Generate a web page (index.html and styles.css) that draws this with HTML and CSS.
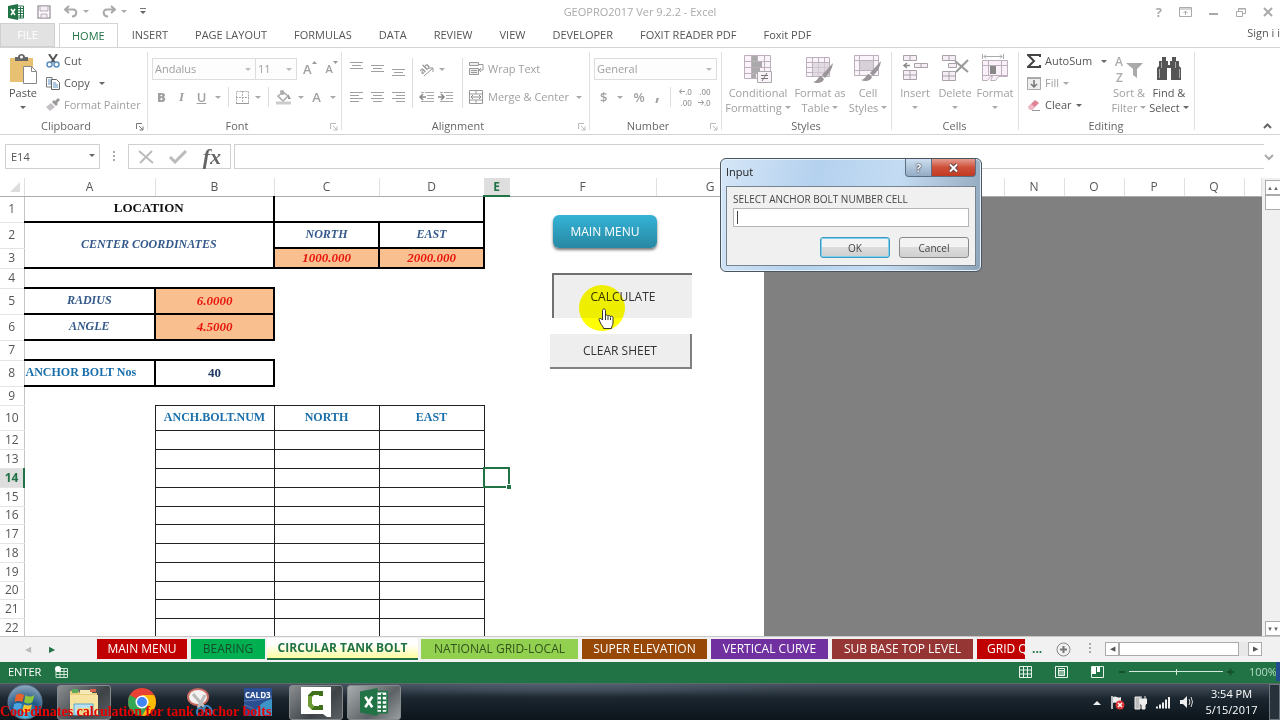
FILE: index.html
```html
<!DOCTYPE html>
<html lang="en">
<head>
    <meta charset="UTF-8">
    <title>GEOPRO2017 Ver 9.2.2 - Excel</title>
    <link rel="stylesheet" href="styles.css">
</head>
<body>
    <!-- shared icons -->
    <svg class="defs" aria-hidden="true">
        <symbol id="excel" viewBox="0 0 16 16">
            <path d="M9 2h6.500v12H9z" fill="#fff" stroke="#217346"/>
            <path d="M10 4.500h5M10 7h5M10 9.500h5M10 12h5M12.500 3v11" stroke="#217346" fill="none"/>
            <path d="M0 2l10-2v16L0 14z" fill="#217346"/>
            <path d="M3 5l4 6M7 5l-4 6" stroke="#fff" stroke-width="1.500"/>
        </symbol>
        <symbol id="launcher" viewBox="0 0 8 8">
            <path d="M.5 6V.5H6M3 3l4 4M7 3.500V7H3.500" fill="none" stroke="currentColor"/>
        </symbol>
        <symbol id="lines-left" viewBox="0 0 14 12"><path d="M0 1.500h13M0 4.500h9M0 7.500h13M0 10.500h9" stroke="currentColor"/></symbol>
        <symbol id="lines-center" viewBox="0 0 14 12"><path d="M0 1.500h13M2 4.500h9M0 7.500h13M2 10.500h9" stroke="currentColor"/></symbol>
        <symbol id="lines-right" viewBox="0 0 14 12"><path d="M0 1.500h13M4 4.500h9M0 7.500h13M4 10.500h9" stroke="currentColor"/></symbol>
        <symbol id="lines-top" viewBox="0 0 14 16"><path d="M0 1.500h13M2 4.500h9M0 7.500h13" stroke="currentColor"/></symbol>
        <symbol id="lines-mid" viewBox="0 0 14 16"><path d="M0 4.500h13M2 7.500h9M0 10.500h13" stroke="currentColor"/></symbol>
        <symbol id="lines-bottom" viewBox="0 0 14 16"><path d="M0 8.500h13M2 11.500h9M0 14.500h13" stroke="currentColor"/></symbol>
        <symbol id="brush" viewBox="0 0 22 22">
            <path d="M21 1L10 13l3 3q7-7 8-15z" fill="#999599"/>
            <path d="M9 14c-3 0-3 5-8 6 4 2 10 1 11-3z" fill="#999599"/>
        </symbol>
    </svg>

    <header class="titlebar">
        <div class="quick">
            <svg class="q-excel" width="16" height="16"><use href="#excel"/></svg>
            <button class="icon" aria-label="Save"><svg width="14" height="14" viewBox="0 0 14 14"><path d="M1 1h12v12H1z" fill="none" stroke="#aaa0aa" stroke-width="1.500"/><path d="M3 1h8v5H3zM4 9h6v4H4z" fill="#f5eef5" stroke="#b5a8b5"/></svg></button>
            <button class="icon undo" aria-label="Undo"><svg width="14" height="13" viewBox="0 0 14 13"><path d="M5 1L1 4.500 5 8M1.500 4.500H9c5 0 4 7-1 7" fill="none" stroke="#a9a9a9" stroke-width="2"/></svg><i class="caret"></i></button>
            <button class="icon redo" aria-label="Redo"><svg width="14" height="13" viewBox="0 0 14 13"><path d="M9 1l4 3.500L9 8M12.500 4.500H5c-5 0-4 7 1 7" fill="none" stroke="#a9a9a9" stroke-width="2"/></svg><i class="caret"></i></button>
            <button class="icon" aria-label="Customize"><svg width="6" height="7" viewBox="0 0 6 7"><path d="M0 .5h6" stroke="#777"/><path d="M0 3h6L3 6z" fill="#666"/></svg></button>
        </div>
        <h1>GEOPRO2017 Ver 9.2.2 - Excel</h1>
        <div class="winbtns">
            <button class="icon help" aria-label="Help">?</button>
            <button class="icon" aria-label="Ribbon options"><svg width="13" height="10" viewBox="0 0 13 10"><path d="M.5.5h12v9H.5zM0 2h13M6.500 8V4M4.500 6l2-2 2 2" fill="none" stroke="#aaa"/></svg></button>
            <button class="icon" aria-label="Minimize"><svg width="10" height="10" viewBox="0 0 10 10"><path d="M0 7h9" stroke="#aaa" stroke-width="2"/></svg></button>
            <button class="icon" aria-label="Restore"><svg width="10" height="10" viewBox="0 0 10 10"><path d="M.5 4.500h6v5h-6zM2.500 4V1.500h7v5H7M2 2h8" fill="none" stroke="#aaa"/></svg></button>
            <button class="icon" aria-label="Close"><svg width="10" height="10" viewBox="0 0 10 10"><path d="M1 1l8 8M9 1L1 9" stroke="#aaa" stroke-width="2"/></svg></button>
        </div>
    </header>

    <nav class="tabs">
        <button class="file">FILE</button>
        <button class="on">HOME</button>
        <button>INSERT</button>
        <button>PAGE LAYOUT</button>
        <button>FORMULAS</button>
        <button>DATA</button>
        <button>REVIEW</button>
        <button>VIEW</button>
        <button>DEVELOPER</button>
        <button>FOXIT READER PDF</button>
        <button>Foxit PDF</button>
        <a class="signin" href="#">Sign i i</a>
    </nav>

    <section class="ribbon">
        <div class="group clipboard">
            <div class="tools">
                <button class="big dark">
                    <svg width="28" height="30" viewBox="0 0 28 30"><path d="M1 4h23v24H1z" fill="#e8c071"/><path d="M6 3h3c0-4 7-4 7 0h3v4H6z" fill="#666"/><circle cx="12.500" cy="3" r="1.500" fill="#fff"/><path d="M14.500 12.500h8l5 5v12h-13z" fill="#fff" stroke="#888"/><path d="M22.500 12.500v5h5" fill="none" stroke="#888"/></svg>
                    <span>Paste</span><i class="caret"></i>
                </button>
                <div class="stack">
                    <button class="small dark"><svg width="14" height="14" viewBox="0 0 14 14"><path d="M3 0l6 9M11 0L5 9" stroke="#555" stroke-width="2"/><circle cx="3.500" cy="10.500" r="2.500" fill="none" stroke="#5b8fc0" stroke-width="1.500"/><circle cx="10.500" cy="10.500" r="2.500" fill="none" stroke="#5b8fc0" stroke-width="1.500"/></svg>Cut</button>
                    <button class="small dark"><svg width="14" height="14" viewBox="0 0 14 14"><path d="M.5 1.500H6V11H.5z" fill="#fff" stroke="#777"/><path d="M5.500 3.500h5l3 3v7h-8z" fill="#fff" stroke="#666"/><path d="M2 4h3M2 6h3M2 8h3M7 7h3M7 9h5M7 11h5" stroke="#5b8fc0"/></svg>Copy<i class="caret far"></i></button>
                    <button class="small"><svg width="14" height="14" viewBox="0 0 14 14"><path d="M0 9l5-4 4 4-5 4z" fill="#c5c0c5"/><path d="M6 4l2-2 4 4-2 2zM9 3l3-3 2 2-3 3z" fill="#999"/></svg>Format Painter</button>
                </div>
            </div>
            <div class="caption">Clipboard<svg class="launch dark" width="8" height="8"><use href="#launcher"/></svg></div>
        </div>

        <div class="group font">
            <div class="tools rows">
                <div class="row">
                    <label class="combo name"><select aria-label="Font"><option>Andalus</option></select></label>
                    <label class="combo size"><select aria-label="Font size"><option>11</option></select></label>
                    <button class="icon glyph grow">A<svg width="5" height="4" viewBox="0 0 5 4"><path d="M0 3l2.500-3L5 3z" fill="#999"/></svg></button>
                    <button class="icon glyph shrink">A<svg width="5" height="4" viewBox="0 0 5 4"><path d="M0 0l2.500 3L5 0z" fill="#999"/></svg></button>
                </div>
                <div class="row styles-row">
                    <button class="icon glyph"><b>B</b></button>
                    <button class="icon glyph serif"><i>I</i></button>
                    <button class="icon glyph"><u>U</u></button><i class="caret"></i>
                    <span class="sep"></span>
                    <button class="icon" aria-label="Borders"><svg width="13" height="13" viewBox="0 0 13 13"><path d="M.5.5h12v12H.5zM6.500 0v12M0 6.500h13" fill="none" stroke="#aaa" stroke-dasharray="2 1"/><path d="M0 12.500h13" stroke="#999"/></svg></button><i class="caret"></i>
                    <span class="sep"></span>
                    <button class="icon" aria-label="Fill color"><svg width="16" height="15" viewBox="0 0 16 15"><path d="M2 6l5-4 5 4-5 5zM5 5V1h2v4" fill="none" stroke="#aaa" stroke-width="1.500"/><path d="M12 4l3 5h-3z" fill="#999"/><path d="M0 13h15" stroke="#ccc" stroke-width="3"/></svg></button><i class="caret"></i>
                    <button class="icon glyph">A</button><i class="caret"></i>
                </div>
            </div>
            <div class="caption">Font<svg class="launch" width="8" height="8"><use href="#launcher"/></svg></div>
        </div>

        <div class="group align">
            <div class="tools">
                <div class="align-a">
                    <div class="row"><svg width="14" height="16"><use href="#lines-top"/></svg><svg width="14" height="16"><use href="#lines-mid"/></svg><svg width="14" height="16"><use href="#lines-bottom"/></svg></div>
                    <div class="row"><svg width="14" height="12"><use href="#lines-left"/></svg><svg width="14" height="12"><use href="#lines-center"/></svg><svg width="14" height="12"><use href="#lines-right"/></svg></div>
                </div>
                <div class="align-b">
                    <div class="row"><svg class="orient" width="16" height="15" viewBox="0 0 16 15"><text x="0" y="10" transform="rotate(-45 5 7)" font-size="9" font-weight="700" fill="#999">ab</text><path d="M5 14l9-8M10 6h4v4" fill="none" stroke="#999"/></svg><i class="caret"></i></div>
                    <div class="row indent"><svg width="15" height="12" viewBox="0 0 15 12"><path d="M6 1.500h9M8 4.500h7M8 7.500h7M2 10.500h13M2 1.500h3" stroke="#aaa"/><path d="M4 3L1 6l3 3M1 6h6" fill="none" stroke="#888" stroke-width="1.500"/></svg><svg width="15" height="12" viewBox="0 0 15 12"><path d="M6 1.500h9M8 4.500h7M8 7.500h7M2 10.500h13M2 1.500h3" stroke="#aaa"/><path d="M3 3l3 3-3 3M0 6h6" fill="none" stroke="#888" stroke-width="1.500"/></svg></div>
                </div>
                <div class="align-c">
                    <button class="small"><svg width="15" height="14" viewBox="0 0 15 14"><path d="M.5.5h9v3h-9zM.5 6.500h9v6h-9z" fill="#eee" stroke="#999"/><path d="M2 8.500h6M2 10.500h6M9 2.500h5V8h-3M12 6l-2 2 2 2" fill="none" stroke="#999"/></svg>Wrap Text</button>
                    <button class="small"><svg width="15" height="14" viewBox="0 0 15 14"><path d="M.5.500h13v13H.5zM0 4h14M0 10h14M7 0v4M7 10v4" fill="none" stroke="#999"/><path d="M2 7h10M4 5L2 7l2 2M10 5l2 2-2 2" fill="none" stroke="#888"/></svg>Merge &amp; Center<i class="caret mid"></i></button>
                </div>
            </div>
            <div class="caption">Alignment<svg class="launch" width="8" height="8"><use href="#launcher"/></svg></div>
        </div>

        <div class="group number">
            <div class="tools rows">
                <div class="row"><label class="combo fmt"><select aria-label="Number format"><option>General</option></select></label></div>
                <div class="row num-row">
                    <button class="icon glyph">$</button><i class="caret"></i>
                    <button class="icon glyph">%</button>
                    <button class="icon glyph comma">,</button>
                    <span class="sep"></span>
                    <button class="dec"><span class="with-arrow"><svg width="6" height="5" viewBox="0 0 6 5"><path d="M2.500 0L.5 2.500l2 2.500M.5 2.500H6" fill="none" stroke="#999"/></svg>.0</span><span>.00</span></button>
                    <button class="dec"><span>.00</span><span class="with-arrow"><svg width="6" height="5" viewBox="0 0 6 5"><path d="M3.500 0l2 2.500-2 2.500M0 2.500h5.500" fill="none" stroke="#999"/></svg>.0</span></button>
                </div>
            </div>
            <div class="caption">Number<svg class="launch" width="8" height="8"><use href="#launcher"/></svg></div>
        </div>

        <div class="group styles">
            <div class="tools">
                <button class="big w1">
                    <svg width="28" height="30" viewBox="0 0 28 30"><path d="M.5 1.500h26v23H.5zM0 7.500h27M0 13.500h27M0 19.500h27M7.500 1v24M13.500 1v24M20.500 1v24" fill="#faf4fa" stroke="#bbb0bb"/><path d="M8 2h5v5H8zM8 8h10v5H8zM8 14h8v5H8zM8 20h4v4H8z" fill="#aaa"/><path d="M13.500 17.500h14v11h-14z" fill="#faf4fa" stroke="#aaa"/><path d="M17 21.500h7M17 24.500h7M23 19l-5 8" stroke="#777"/></svg>
                    <span>Conditional<br>Formatting<i class="caret in"></i></span>
                </button>
                <button class="big w2">
                    <svg width="28" height="30" viewBox="0 0 28 30"><path d="M.5 3.500h23v19H.5zM0 8.500h24M0 13.500h24M0 18.500h24M6.500 3v20M12.500 3v20M18.500 3v20" fill="#faf4fa" stroke="#bbb0bb"/><path d="M7 9h16v13H7z" fill="#d8d0d8" opacity=".7"/><use href="#brush" x="6" y="8" width="22" height="22"/></svg>
                    <span>Format as<br>Table<i class="caret in"></i></span>
                </button>
                <button class="big w3">
                    <svg width="28" height="30" viewBox="0 0 28 30"><path d="M.5 1.500h24v20H.5zM0 6.500h25M0 16.500h25M5.500 1v21M19.500 1v21" fill="#faf4fa" stroke="#bbb0bb"/><path d="M6 7h13v9H6z" fill="#d8d0d8"/><use href="#brush" x="6" y="6" width="22" height="22"/></svg>
                    <span>Cell<br>Styles<i class="caret in"></i></span>
                </button>
            </div>
            <div class="caption">Styles</div>
        </div>

        <div class="group cells">
            <div class="tools">
                <button class="big">
                    <svg width="28" height="30" viewBox="0 0 28 30"><path d="M2.500 1.500h13v5h-13zM9 1v6M2.500 16.500h13v9h-13zM9 16v10M2 21h14M13.500 9.500h13v4h-13zM20 9v5" fill="#f5eef5" stroke="#aaa0aa"/><path d="M9 11.500H3M6 9l-3 2.500L6 14" fill="none" stroke="#888" stroke-width="1.500"/></svg>
                    <span>Insert</span><i class="caret"></i>
                </button>
                <button class="big">
                    <svg width="28" height="30" viewBox="0 0 28 30"><path d="M1.500 1.500h13v5h-13zM8 1v6M1.500 17.500h13v9h-13zM8 17v10M1 22h14M7.500 9.500h8v4h-8z" fill="#f5eef5" stroke="#aaa0aa"/><path d="M14 7l13 11M27 6L15 18" stroke="#999" stroke-width="2"/></svg>
                    <span>Delete</span><i class="caret"></i>
                </button>
                <button class="big">
                    <svg width="28" height="30" viewBox="0 0 28 30"><path d="M1.500 6.500h25v16h-9l-3 4h-5l2-4h-2l-3 4h-5zM1 11.500h26M1 21.500h26M7.500 6v16M20.500 6v16" fill="#faf0fa" stroke="#bbb0bb"/><path d="M9 12h6v8H9z" fill="#888"/><path d="M1.500 0v5M22.500 0v5M3 2.500h18M5 .5l-2 2 2 2M19 .5l2 2-2 2" fill="none" stroke="#aaa"/></svg>
                    <span>Format</span><i class="caret"></i>
                </button>
            </div>
            <div class="caption">Cells</div>
        </div>

        <div class="group editing">
            <div class="tools">
                <div class="stack">
                    <button class="small dark"><svg width="14" height="14" viewBox="0 0 14 14"><path d="M13 3V1H1l6 6-6 6h12v-2" fill="none" stroke="#444" stroke-width="2"/></svg>AutoSum<i class="caret far"></i></button>
                    <button class="small"><svg width="14" height="14" viewBox="0 0 14 14"><path d="M.5 1.500h13v12H.5z" fill="#eee" stroke="#aaa"/><path d="M0 2h14" stroke="#aaa" stroke-width="2"/><path d="M7 4v7M4 8l3 3 3-3" fill="none" stroke="#777" stroke-width="1.500"/></svg>Fill<i class="caret"></i></button>
                    <button class="small dark"><svg width="14" height="14" viewBox="0 0 14 14"><path d="M1 9l7-7 4 3-7 7H3z" fill="#de8296"/><path d="M1 9l3-3 4 3-3 3H3z" fill="#eebac4"/><path d="M5 12.500h8" stroke="#999"/></svg>Clear<i class="caret"></i></button>
                </div>
                <button class="big">
                    <svg width="28" height="30" viewBox="0 0 28 30"><text x="0" y="12" font-size="12" font-weight="600" fill="#aaa">A</text><text x="1" y="28" font-size="12" font-weight="600" fill="#aaa">Z</text><path d="M11 9h17l-6 6v9l-4-3v-6z" fill="#aaa"/></svg>
                    <span>Sort &amp;<br>Filter<i class="caret in"></i></span>
                </button>
                <button class="big dark">
                    <svg width="28" height="30" viewBox="0 0 28 30"><path d="M7 3h4v4h2v4h2V7h2V3h4v4h3v5l2 2v12H16V14h-4v12H2V14l2-2V7h3z" fill="#555"/><path d="M6.500 8v6M4.500 15v9M20.500 8v6M24.500 15v9" stroke="#aaa"/></svg>
                    <span>Find &amp;<br>Select<i class="caret in"></i></span>
                </button>
            </div>
            <div class="caption">Editing</div>
        </div>
        <button class="icon collapse" aria-label="Collapse ribbon"><svg width="9" height="6" viewBox="0 0 9 6"><path d="M1 5l3.500-3.500L8 5" fill="none" stroke="#666" stroke-width="2"/></svg></button>
    </section>

    <section class="formula">
        <label class="namebox"><input type="text" value="E14" aria-label="Name box"><i class="caret"></i></label>
        <span class="dots"></span>
        <div class="fx">
            <button class="icon" aria-label="Cancel entry"><svg width="16" height="14" viewBox="0 0 16 14"><path d="M1 1l14 12M14 1L2 13" stroke="#bbb" stroke-width="2"/></svg></button>
            <button class="icon" aria-label="Enter"><svg width="18" height="14" viewBox="0 0 18 14"><path d="M1 7l5 5L17 1" fill="none" stroke="#bbb" stroke-width="3"/></svg></button>
            <button class="icon fxbtn">fx</button>
        </div>
        <input class="bar" type="text" aria-label="Formula bar">
        <svg class="expand" width="10" height="7" viewBox="0 0 10 7"><path d="M1 1l4 4 4-4" fill="none" stroke="#aaa" stroke-width="2"/></svg>
    </section>

    <main class="workbook">
        <div class="sheet">
            <table>
                <colgroup>
                    <col class="c-head"><col class="c-a"><col class="c-b"><col class="c-cd"><col class="c-cd"><col class="c-e"><col class="c-f"><col class="c-g">
                    <col class="c-n" span="8"><col>
                </colgroup>
                <thead>
                    <tr>
                        <th class="corner"><svg width="10" height="10" viewBox="0 0 10 10"><path d="M10 0v10H0z" fill="#ddd"/></svg></th>
                        <th>A</th><th>B</th><th>C</th><th>D</th><th class="sel">E</th><th>F</th><th>G</th>
                        <th>J</th><th>K</th><th>L</th><th>M</th><th>N</th><th>O</th><th>P</th><th>Q</th><th></th>
                    </tr>
                </thead>
                <tbody>
                    <tr class="tall"><th>1</th><td colspan="2" class="box title">LOCATION</td><td colspan="2" class="box"></td><td></td><td></td><td></td><td class="unused" colspan="9" rowspan="21"></td></tr>
                    <tr class="tall"><th>2</th><td colspan="2" rowspan="2" class="box navy">CENTER COORDINATES</td><td class="box navy">NORTH</td><td class="box navy">EAST</td><td></td><td></td><td></td></tr>
                    <tr><th>3</th><td class="box value">1000.000</td><td class="box value">2000.000</td><td></td><td></td><td></td></tr>
                    <tr><th>4</th><td></td><td></td><td></td><td></td><td></td><td></td><td></td></tr>
                    <tr class="tall"><th>5</th><td class="box navy">RADIUS</td><td class="box value">6.0000</td><td></td><td></td><td></td><td></td><td></td></tr>
                    <tr class="tall"><th>6</th><td class="box navy">ANGLE</td><td class="box value">4.5000</td><td></td><td></td><td></td><td></td><td></td></tr>
                    <tr><th>7</th><td></td><td></td><td></td><td></td><td></td><td></td><td></td></tr>
                    <tr class="tall"><th>8</th><td class="box blue left">ANCHOR BOLT Nos</td><td class="box count">40</td><td></td><td></td><td></td><td></td><td></td></tr>
                    <tr class="line"><th>9</th><td></td><td></td><td></td><td></td><td></td><td></td><td></td></tr>
                    <tr class="head"><th>10</th><td></td><td class="thin blue">ANCH.BOLT.NUM</td><td class="thin blue">NORTH</td><td class="thin blue">EAST</td><td></td><td></td><td></td></tr>
                    <tr class="line"><th>12</th><td></td><td class="thin"></td><td class="thin"></td><td class="thin"></td><td></td><td></td><td></td></tr>
                    <tr class="line"><th>13</th><td></td><td class="thin"></td><td class="thin"></td><td class="thin"></td><td></td><td></td><td></td></tr>
                    <tr class="line"><th class="sel">14</th><td></td><td class="thin"></td><td class="thin"></td><td class="thin"></td><td class="active"></td><td></td><td></td></tr>
                    <tr class="line"><th>15</th><td></td><td class="thin"></td><td class="thin"></td><td class="thin"></td><td></td><td></td><td></td></tr>
                    <tr class="short"><th>16</th><td></td><td class="thin"></td><td class="thin"></td><td class="thin"></td><td></td><td></td><td></td></tr>
                    <tr class="line"><th>17</th><td></td><td class="thin"></td><td class="thin"></td><td class="thin"></td><td></td><td></td><td></td></tr>
                    <tr class="line"><th>18</th><td></td><td class="thin"></td><td class="thin"></td><td class="thin"></td><td></td><td></td><td></td></tr>
                    <tr class="line"><th>19</th><td></td><td class="thin"></td><td class="thin"></td><td class="thin"></td><td></td><td></td><td></td></tr>
                    <tr class="short"><th>20</th><td></td><td class="thin"></td><td class="thin"></td><td class="thin"></td><td></td><td></td><td></td></tr>
                    <tr class="line"><th>21</th><td></td><td class="thin"></td><td class="thin"></td><td class="thin"></td><td></td><td></td><td></td></tr>
                    <tr class="line"><th>22</th><td></td><td class="thin"></td><td class="thin"></td><td class="thin"></td><td></td><td></td><td></td></tr>
                </tbody>
            </table>

            <button class="shape menu">MAIN MENU</button>
            <button class="shape calc">CALCULATE</button>
            <button class="shape clear">CLEAR SHEET</button>
            <span class="halo"></span>
            <svg class="hand" width="18" height="22" viewBox="0 0 18 22"><path d="M4.500 12V2.500c0-2 3-2 3 0V8c0-1.500 2.500-1.500 2.500.5 0-1.500 2.500-1.500 2.500.5 0-1.500 2.500-1 2.500.5V15c0 2-1.500 3-1.500 5.500h-8c0-2-2-3-3-5.500L1 11.500c0-1.500 2-1.500 3.500.5z" fill="#fff" stroke="#333"/><path d="M7.500 8v4M10 9v3M12.500 9.500V12" stroke="#333"/></svg>
        </div>
        <div class="vscroll">
            <button aria-label="Scroll up">&#9650;&#9650;</button>
            <span class="thumb"></span>
            <span class="track"></span>
            <button aria-label="Scroll down">&#9660;&#9660;</button>
        </div>
    </main>

    <form class="dialog" role="dialog" aria-label="Input">
        <div class="dlg-title">
            <h2>Input</h2>
            <button type="button" class="dlg-help" aria-label="Help">?</button><button type="button" class="dlg-close" aria-label="Close"><svg width="11" height="10" viewBox="0 0 11 10"><path d="M2 1.500l7 7M9 1.500l-7 7" stroke="#644" stroke-width="4"/><path d="M2 1.500l7 7M9 1.500l-7 7" stroke="#fff" stroke-width="2"/></svg></button>
        </div>
        <div class="dlg-body">
            <label for="bolt">SELECT ANCHOR BOLT NUMBER CELL</label>
            <div class="field"><input type="text" id="bolt"></div>
            <div class="dlg-btns">
                <button type="button" class="default">OK</button>
                <button type="button">Cancel</button>
            </div>
        </div>
    </form>

    <nav class="sheets">
        <div class="sheet-nav"><button class="icon prev" aria-label="Previous">&#9664;</button><button class="icon next" aria-label="Next">&#9654;</button></div>
        <button class="tab red t1">MAIN MENU</button>
        <button class="tab green t2">BEARING</button>
        <button class="tab current t3">CIRCULAR TANK BOLT</button>
        <button class="tab lime t4">NATIONAL GRID-LOCAL</button>
        <button class="tab brown t5">SUPER ELEVATION</button>
        <button class="tab purple t6">VERTICAL CURVE</button>
        <button class="tab maroon t7">SUB BASE TOP LEVEL</button>
        <button class="tab red t8">GRID Q</button>
        <span class="more">...</span>
        <button class="icon" aria-label="New sheet"><svg width="15" height="15" viewBox="0 0 15 15"><circle cx="7.500" cy="7.500" r="6.500" fill="none" stroke="#888"/><path d="M7.500 4v7M4 7.500h7" stroke="#777" stroke-width="2"/></svg></button>
        <span class="dots"></span>
        <div class="hscroll"><button aria-label="Scroll left">&#9664;</button><span class="thumb"></span><button aria-label="Scroll right">&#9654;</button></div>
    </nav>

    <footer class="status">
        <span class="mode">ENTER</span>
        <svg width="13" height="12" viewBox="0 0 13 12"><path d="M1 2.500h11.500v9H1z" fill="none" stroke="#cfe6d8"/><path d="M1 5.500h11M1 8.500h11M5 3v9M9 3v9" stroke="#cfe6d8"/><circle cx="3" cy="3" r="3" fill="#fff"/></svg>
        <div class="views">
            <svg width="13" height="12" viewBox="0 0 13 12"><path d="M.5.500h12v11H.5zM0 4h13M0 8h13M4.500 0v12M8.500 0v12" fill="none" stroke="#e8f3ec"/></svg>
            <svg width="13" height="12" viewBox="0 0 13 12"><path d="M.5.500h12v11H.5zM3.500 2.500h6v7h-6zM4 4.500h5M4 6h5M4 8h5" fill="none" stroke="#e8f3ec"/></svg>
            <svg width="13" height="12" viewBox="0 0 13 12"><path d="M.5.500h12v11H.5z" fill="none" stroke="#e8f3ec"/><path d="M1 1h4v7H1zM6 1h3v5H6z" fill="#fff"/></svg>
        </div>
        <svg class="zoomer" width="116" height="12" viewBox="0 0 116 12"><path d="M0 6h6M108 6h7M111.500 2.500v7" stroke="#14502d" stroke-width="2"/><path d="M10 5.500h94M57.500 3v6" stroke="#d5e8dc"/></svg>
        <span class="pct">100%</span>
        <span class="edge"></span>
    </footer>

    <footer class="taskbar">
        <button class="app start" aria-label="Start"><svg width="36" height="36" viewBox="0 0 36 36">
            <defs><radialGradient id="orb" cx=".5" cy=".9" r=".9"><stop offset="0" stop-color="#4fc3e8"/><stop offset=".5" stop-color="#1d5687"/><stop offset="1" stop-color="#93a9bd"/></radialGradient></defs>
            <circle cx="18" cy="18" r="17" fill="url(#orb)" stroke="#5b7c96"/>
            <path d="M9 11q4-3 8 0l-1.500 7q-4-2-8 0z" fill="#e8622c"/><path d="M18.500 11q4 3 9 0l-2 7q-4 3-8.500 0z" fill="#8fc33c"/>
            <path d="M7 20q4-2 8 0l-2 7q-3-3-7 0z" fill="#4aa3df"/><path d="M17 20.500q4 2 8 0l-2 7q-4 2-8 0z" fill="#f8c531"/></svg></button>
        <button class="app open" aria-label="Explorer"><svg width="32" height="30" viewBox="0 0 32 30"><path d="M2 4h8l2 2h17v22H2z" fill="#e9cf7b"/><path d="M4 2h6v4H4z" fill="#5cab5a"/><path d="M12 3h12v4H12z" fill="#f5e9b8"/><path d="M22 2h6v3h-6z" fill="#d9604b"/><path d="M2 8h28v20H2z" fill="#f6e3a0"/><path d="M6 17h19v11H6z" fill="#b9e0f1" stroke="#5ba9cb"/><path d="M9 21h13v7H9z" fill="#e8d58a"/></svg></button>
        <button class="app" aria-label="Chrome"><svg width="28" height="28" viewBox="0 0 28 28"><circle cx="14" cy="14" r="14" fill="#e94235"/><path d="M14 14L1.900 7A14 14 0 0 0 14 28l6-10z" fill="#34a853"/><path d="M14 14l6 4-6 10A14 14 0 0 0 26.100 7H14z" fill="#fbbc05"/><circle cx="14" cy="14" r="6.500" fill="#fff"/><circle cx="14" cy="14" r="5" fill="#4285f4"/></svg></button>
        <button class="app" aria-label="Snipping tool"><svg width="28" height="28" viewBox="0 0 28 28"><ellipse cx="12" cy="9" rx="10" ry="8" fill="#f4f1f1" stroke="#c96a62" stroke-width="2"/><path d="M7 6l12 14M19 7l-7 13" stroke="#bbb" stroke-width="3"/><ellipse cx="22" cy="22" rx="3" ry="5" transform="rotate(-40 22 22)" fill="none" stroke="#3d86c6" stroke-width="2"/><ellipse cx="14" cy="24" rx="3" ry="4" fill="none" stroke="#3d86c6" stroke-width="2"/></svg></button>
        <button class="app" aria-label="CALD3"><svg width="28" height="28" viewBox="0 0 28 28"><path d="M0 0h28v28H0z" fill="#2a4f90"/><path d="M28 11Q14 14 10 28h18z" fill="#3c94c8"/><path d="M0 13q14 0 28-4M0 17q10 2 16 11" stroke="#5a78b4" fill="none"/><text x="1" y="10" font-size="8" font-weight="700" fill="#fff">CALD3</text></svg></button>
        <button class="app open cam" aria-label="Camtasia"><svg width="30" height="30" viewBox="0 0 30 30"><path d="M0 0h30v30H26l-4-3H0z" fill="#fff"/><path d="M20 9V6H12l-3 3v9l3 3h8v-3" fill="none" stroke="#40701c" stroke-width="4"/><path d="M9 9v9l3 3" fill="none" stroke="#6d9a35" stroke-width="4"/></svg></button>
        <button class="app open lit" aria-label="Excel"><svg width="28" height="28"><use href="#excel"/></svg></button>
        <div class="tray">
            <svg width="8" height="5" viewBox="0 0 8 5"><path d="M0 5l4-4 4 4z" fill="#eee"/></svg>
            <svg width="15" height="15" viewBox="0 0 15 15"><path d="M2 1v13" stroke="#eee" stroke-width="1.500"/><path d="M3 2c3-2 5 2 8 0v6c-3 2-5-2-8 0z" fill="#eee"/><circle cx="10" cy="10" r="4.500" fill="#d33"/><path d="M8 8l4 4M12 8l-4 4" stroke="#fff" stroke-width="1.500"/></svg>
            <svg width="13" height="15" viewBox="0 0 13 15"><path d="M1 2h5v12H1z" fill="#bbb" stroke="#eee"/><path d="M6 4h7v4l-2 2v4H8v-4L6 8zM7 1v3M11 1v3" fill="#eee" stroke="#eee"/></svg>
            <svg width="15" height="13" viewBox="0 0 15 13"><path d="M1 12.500v-2M4 12.500v-4M7 12.500v-6M10 12.500v-9M13 12.500V1" stroke="#eee" stroke-width="2"/></svg>
            <svg width="14" height="14" viewBox="0 0 14 14"><path d="M0 5h3l4-4v12L3 9H0z" fill="#eee"/><path d="M9 4q2 3 0 6M11 2q3 5 0 10" fill="none" stroke="#ddd"/></svg>
        </div>
        <div class="clock">3:54 PM<br>5/15/2017</div>
        <button class="peek" aria-label="Show desktop"></button>
        <p class="caption-red">Coordinates calculation for tank anchor bolts</p>
    </footer>
</body>
</html>
```

FILE: styles.css
```css
* {
    box-sizing: border-box;
}
body {
    margin: 0;
    height: 100vh;
    display: flex;
    flex-direction: column;
    overflow: hidden;
    position: relative;
    background: #fff;
    color: #555;
    font-family: "Open Sans", "Noto Sans", sans-serif;
    font-size: 11px;
    line-height: 14px;
}
button, input, select {
    font: inherit;
    color: inherit;
    padding: 0;
    border: 0;
    background: none;
    border-radius: 0;
}
svg {
    display: block;
    flex: none;
}
.defs {
    position: absolute;
    width: 0;
    height: 0;
}
.icon {
    display: flex;
    align-items: center;
    justify-content: center;
}
.caret {
    display: inline-block;
    flex: none;
    border: 3px solid transparent;
    border-top-color: #aaa;
    border-bottom: 0;
}
.dark .caret {
    border-top-color: #666;
}

/* title bar */
.titlebar {
    display: flex;
    flex: 0 0 23px;
    align-items: center;
    justify-content: space-between;
    position: relative;
}
.titlebar h1 {
    margin: 0;
    font-size: 11px;
    font-weight: 400;
    color: #aaa;
}
.quick {
    display: flex;
    align-items: center;
    width: 300px;
    padding-left: 8px;
    height: 20px;
    gap: 13px;
}
.undo, .redo {
    gap: 5px;
}
.winbtns {
    display: flex;
    width: 300px;
    height: 20px;
    align-items: center;
    justify-content: flex-end;
    gap: 17px;
    padding-right: 7px;
}
.help {
    color: #aaa;
    font-size: 13px;
    font-weight: 700;
}

/* ribbon tabs */
.tabs {
    display: flex;
    flex: 0 0 24px;
    gap: 1px;
    border-bottom: 1px solid #d4d4d4;
}
.tabs button {
    padding: 0 13px;
    height: 24px;
}
.tabs .file {
    width: 55px;
    margin-right: 3px;
    background: #e2e2e2;
    border: 1px solid #d0d0d0;
    color: #fff;
}
.tabs .on {
    color: #217346;
    background: #fff;
    border: 1px solid #d4d4d4;
    border-bottom: 0;
    padding: 0 12px;
}
.signin {
    margin-left: auto;
    padding-top: 3px;
    color: #555;
    text-decoration: none;
    white-space: nowrap;
}

/* ribbon */
.ribbon {
    display: flex;
    flex: 0 0 87px;
    border-bottom: 1px solid #d4d4d4;
}
.group {
    display: flex;
    flex-direction: column;
    position: relative;
    flex: none;
    color: #a0a0a0;
}
.group::after {
    content: "";
    position: absolute;
    right: 0;
    top: 4px;
    bottom: 4px;
    border-right: 1px solid #e0e0e0;
}
.clipboard { width: 148px; }
.font { width: 194px; }
.align { width: 248px; }
.number { width: 132px; }
.styles { width: 170px; }
.cells { width: 127px; }
.editing { width: 176px; }
.group .dark {
    color: #555;
}
.tools {
    display: flex;
    flex: 1;
    padding-top: 6px;
}
.caption {
    position: relative;
    height: 16px;
    line-height: 15px;
    text-align: center;
    color: #666;
    padding-right: 16px;
}
.styles .caption, .cells .caption, .editing .caption {
    padding-right: 2px;
}
.launch {
    position: absolute;
    right: 4px;
    top: 5px;
    color: #bbb;
}
.group .launch.dark {
    color: #777;
}
.big {
    display: flex;
    flex-direction: column;
    align-items: center;
    line-height: 15px;
    white-space: nowrap;
    flex: none;
}
.big > span {
    margin-top: 1px;
}
.big > .caret {
    margin-top: 6px;
}
.clipboard .big {
    width: 46px;
}
.stack {
    display: flex;
    flex-direction: column;
    gap: 8px;
}
.small {
    display: flex;
    align-items: center;
    gap: 4px;
    height: 14px;
    white-space: nowrap;
}
.caret.far { margin-left: 5px; }
.caret.mid { margin-left: 3px; }
.caret.in {
    margin-left: 3px;
    vertical-align: 3px;
}
.rows {
    flex-direction: column;
}
.row {
    display: flex;
    align-items: center;
}
.font .tools, .number .tools {
    padding: 10px 0 0 4px;
}
.font .row, .number .row {
    height: 22px;
}
.font .rows, .number .rows {
    gap: 6px;
}
.combo {
    position: relative;
    height: 22px;
    border: 1px solid #ddd;
    background: #fdfdfd;
}
.combo::after, .namebox .caret {
    content: "";
    position: absolute;
    right: 4px;
    top: 9px;
    border: 3px solid transparent;
    border-top-color: #bbb;
    border-bottom: 0;
}
.combo select {
    appearance: none;
    width: 100%;
    height: 20px;
    padding-left: 2px;
}
.name { width: 104px; }
.size {
    width: 41px;
    border-left: 0;
}
.fmt { width: 123px; }
.glyph {
    font-size: 13px;
    font-weight: 600;
    line-height: 16px;
}
.glyph.grow, .glyph.shrink {
    align-items: flex-start;
    margin-left: 6px;
}
.glyph.shrink {
    font-size: 11px;
    margin-left: 9px;
}
.serif {
    font-family: "Liberation Serif", serif;
}
.styles-row {
    padding-left: 5px;
    gap: 8px;
}
.styles-row .glyph {
    width: 9px;
    margin-right: 3px;
}
.styles-row .sep {
    margin: 0 -1px;
}
.styles-row .caret {
    margin-left: -2px;
}
.sep {
    height: 20px;
    border-left: 1px solid #ddd;
}
.align .tools {
    padding: 10px 0 0 8px;
}
.align-a, .align-b, .align-c {
    display: flex;
    flex-direction: column;
    gap: 6px;
    height: 50px;
}
.align-a .row, .align-b .row, .align-c .small {
    height: 22px;
}
.align-a .row {
    gap: 7px;
    width: 62px;
}
.align-b {
    border: solid #ddd;
    border-width: 0 1px;
    padding: 0 6px;
    width: 51px;
}
.align-b .row {
    gap: 4px;
}
.orient {
    overflow: visible;
}
.align-c {
    padding-left: 6px;
}
.num-row {
    padding-left: 6px;
    gap: 10px;
}
.num-row .comma {
    font-size: 20px;
    line-height: 8px;
    padding-bottom: 8px;
}
.dec {
    display: flex;
    flex-direction: column;
    align-items: flex-end;
    font-size: 8px;
    line-height: 11px;
    font-weight: 600;
}
.with-arrow {
    display: flex;
    align-items: center;
}
.num-row .dec {
    margin: 0 -2px;
}
.styles .big { width: 52px; }
.styles .w1 { width: 72px; }
.styles .w3 { width: 44px; }
.cells .tools { padding-left: 3px; }
.cells .big { width: 40px; }
.editing .tools {
    padding-left: 8px;
}
.editing .stack {
    width: 82px;
}
.editing .big {
    width: 40px;
}
.collapse {
    margin: auto 8px 5px auto;
}

/* formula bar */
.formula {
    display: flex;
    flex: 0 0 25px;
    margin: 9px 0 9px 5px;
}
.namebox {
    position: relative;
    width: 95px;
    border: 1px solid #d0d0d0;
}
.namebox input {
    width: 70px;
    height: 22px;
    padding-left: 5px;
}
.namebox .caret {
    border-top-color: #666;
}
.dots {
    width: 2px;
    height: 12px;
    margin: auto 13px;
    background: repeating-linear-gradient(#aaa 0 2px, transparent 2px 4px);
}
.fx {
    display: flex;
    align-items: center;
    width: 103px;
    padding: 0 9px;
    justify-content: space-between;
    border: 1px solid #d0d0d0;
}
.fxbtn {
    font-family: "Liberation Serif", serif;
    font-style: italic;
    font-weight: 700;
    font-size: 22px;
    color: #666;
}
.bar {
    flex: 1;
    margin-left: 3px;
    border: 1px solid #d0d0d0;
    border-right: 0;
}
.expand {
    margin: 10px 6px 0 0;
}

/* worksheet */
.workbook {
    display: flex;
    flex: 1;
    min-height: 0;
}
.sheet {
    flex: 1;
    min-width: 0;
    overflow: hidden;
    position: relative;
    background: linear-gradient(#808080, #808080) no-repeat 764px 18px;
}
.sheet table {
    width: 100%;
    table-layout: fixed;
    border-collapse: collapse;
    background: #fff;
}
.c-head { width: 24px; }
.c-a { width: 131px; }
.c-b { width: 119px; }
.c-cd { width: 105px; }
.c-e { width: 25px; }
.c-f { width: 147px; }
.c-g { width: 108px; }
.c-n { width: 60px; }
.sheet th, .sheet td {
    padding: 0;
    overflow: hidden;
    white-space: nowrap;
}
.sheet thead th {
    height: 18px;
    font-weight: 400;
    font-size: 12px;
    border-bottom: 1px solid #ababab;
    border-right: 1px solid #e0e0e0;
}
.corner svg {
    margin-left: 10px;
}
.sheet thead .sel {
    background: #dedede;
    color: #217346;
    font-weight: 700;
    border-bottom: 2px solid #217346;
}
.sheet tbody th {
    font-weight: 400;
    font-size: 12px;
    border-right: 1px solid #c4c4c4;
    border-bottom: 1px solid #e4e4e4;
}
.sheet tbody .sel {
    background: #dedede;
    color: #217346;
    font-weight: 700;
    border-right: 2px solid #217346;
}
.sheet tbody tr { height: 20px; }
.sheet .tall { height: 26px; }
.sheet .head { height: 25px; }
.sheet .line { height: 19px; }
.sheet .short { height: 18px; }
.sheet td {
    font-family: "Liberation Serif", serif;
    font-size: 12px;
    font-weight: 700;
    line-height: 14px;
    text-align: center;
}
.sheet .box {
    border: 2px solid #000;
}
.sheet tr:first-child .box {
    border-top: 1px solid #ababab;
}
.sheet th + .box {
    border-left: 1px solid #c4c4c4;
}
.sheet .thin {
    border: 1px solid #222;
}
.sheet .title {
    font-size: 13px;
    color: #111;
}
.sheet .navy, .sheet .blue, .sheet .title {
    padding-bottom: 2px;
}
.sheet .navy {
    color: #34598a;
    font-style: italic;
}
.sheet .blue {
    color: #1b6fab;
}
.sheet .left {
    text-align: left;
    padding-left: 1px;
}
.sheet .value {
    background: #fabf8f;
    color: #e8150c;
    font-style: italic;
    font-size: 13px;
}
.sheet .count {
    color: #1f3864;
    font-size: 13px;
}
.sheet .unused {
    background: #808080;
}
.sheet .active {
    position: relative;
    overflow: visible;
    outline: 2px solid #217346;
    outline-offset: -1px;
}
.active::after {
    content: "";
    position: absolute;
    right: -2px;
    bottom: -2px;
    width: 4px;
    height: 4px;
    background: #217346;
    outline: 1px solid #fff;
}
.shape {
    position: absolute;
    font-size: 12px;
    color: #333;
    background: #eee;
}
.menu {
    left: 553px;
    top: 37px;
    width: 104px;
    height: 33px;
    border-radius: 6px;
    color: #fff;
    background: linear-gradient(#35b3d6, #2788a3);
    box-shadow: 0 2px 3px #777;
}
.calc {
    left: 552px;
    top: 95px;
    width: 140px;
    height: 45px;
    border: solid #707070;
    border-width: 2px 0 0 2px;
}
.clear {
    left: 550px;
    top: 156px;
    width: 142px;
    height: 35px;
    border: solid #808080;
    border-width: 0 2px 2px 0;
}
.halo {
    position: absolute;
    left: 579px;
    top: 107px;
    width: 46px;
    height: 46px;
    border-radius: 50%;
    background: #ff0;
    mix-blend-mode: multiply;
}
.hand {
    position: absolute;
    left: 598px;
    top: 130px;
}
.vscroll {
    display: flex;
    flex-direction: column;
    flex: 0 0 18px;
    padding: 2px 0 0 3px;
    background: #f0f0f0;
}
.vscroll button {
    height: 15px;
    border: 1px solid #aaa;
    border-right: 0;
    background: #fff;
    font-size: 6px;
    color: #666;
    line-height: 12px;
}
.vscroll .thumb {
    height: 15px;
    background: #fff;
    border: 1px solid #aaa;
    border-right: 0;
}
.vscroll .track {
    flex: 1;
}

/* input box */
.dialog {
    position: absolute;
    left: 720px;
    top: 158px;
    width: 262px;
    height: 114px;
    padding: 0 5px 6px;
    border: 1px solid #4a5560;
    border-radius: 6px;
    background: linear-gradient(100deg, #d5e6f7 0%, #b4d1ee 35%, #c4dcf3 65%, #8ea4b8 100%);
    box-shadow: inset 0 0 0 1px #e6f1fb;
}
.dlg-title {
    display: flex;
    height: 27px;
}
.dlg-title h2 {
    flex: 1;
    margin: 6px 0 0;
    font-size: 11px;
    font-weight: 400;
    color: #222;
}
.dlg-help, .dlg-close {
    display: flex;
    align-items: center;
    justify-content: center;
    height: 18px;
    border: 1px solid #5c6f82;
    border-top: 0;
}
.dlg-help {
    width: 27px;
    font-weight: 700;
    color: #fff;
    text-shadow: 0 0 2px #223, 0 0 1px #223;
    border-radius: 0 0 0 4px;
    background: linear-gradient(#cddff0, #93abc4);
}
.dlg-close {
    width: 44px;
    border-left: 0;
    border-radius: 0 0 4px 0;
    background: linear-gradient(#e39c90, #cf4e38 50%, #c03a22);
}
.dlg-body {
    height: 80px;
    padding: 5px 6px;
    border: 1px solid #75828f;
    background: #f0f0f0;
    color: #444;
}
.dlg-body label {
    display: block;
    height: 16px;
    font-size: 10px;
    line-height: 15px;
    white-space: nowrap;
}
.field {
    position: relative;
    height: 19px;
}
.field input {
    width: 100%;
    height: 19px;
    border: 1px solid #b5b5b5;
    background: #fff;
}
/* text caret */
.field::after {
    content: "";
    position: absolute;
    left: 4px;
    top: 3px;
    height: 13px;
    border-left: 1px solid #444;
}
.dlg-btns {
    display: flex;
    justify-content: flex-end;
    gap: 9px;
    margin-top: 10px;
    font-size: 10px;
}
.dlg-btns button {
    width: 70px;
    height: 21px;
    border: 1px solid #8a8a8a;
    border-radius: 3px;
    background: linear-gradient(#f3f3f3 50%, #dcdcdc 50%, #d0d0d0);
}
.dlg-btns .default {
    border-color: #3c9bc6;
    box-shadow: inset 0 0 0 1px #7fd0ee;
}

/* sheet tabs */
.sheets {
    display: flex;
    flex: 0 0 26px;
    align-items: center;
    padding-bottom: 1px;
    background: #f1f1f1;
    border-top: 1px solid #c8c8c8;
}
.sheet-nav {
    display: flex;
    flex: 0 0 97px;
    gap: 18px;
    padding-left: 25px;
    font-size: 8px;
}
.prev { color: #bbb; }
.next { color: #217346; }
.tab {
    flex: none;
    height: 20px;
    margin-right: 4px;
    font-size: 12px;
    line-height: 20px;
    color: #fff;
    white-space: nowrap;
    overflow: hidden;
}
.t1 { width: 90px; }
.t2 { width: 74px; }
.t3 { width: 151px; }
.t4 { width: 157px; }
.t5 { width: 125px; }
.t6 { width: 117px; }
.t7 { width: 141px; }
.t8 { width: 48px; }
.sheets .t2 { margin-right: 2px; }
.sheets .t3 { margin-right: 3px; }
.sheets .t8 {
    padding-left: 10px;
    text-align: left;
}
.red { background: #c00000; }
.green { background: #00b050; color: #154d2c; }
.lime { background: #92d050; color: #33531c; }
.brown { background: #974706; }
.purple { background: #7030a0; }
.maroon { background: #963634; }
.current {
    height: 22px;
    color: #217346;
    font-weight: 700;
    background: linear-gradient(#fff 30%, #fdfda0);
    border-bottom: 2px solid #217346;
}
.more {
    margin: 0 14px 0 3px;
    font-size: 12px;
    font-weight: 700;
    color: #217346;
}
.sheets .dots {
    margin: 0 14px 0 18px;
}
.hscroll {
    display: flex;
    flex: 1;
    height: 14px;
    margin-right: 18px;
    background: #e8e8e8;
}
.hscroll button {
    flex: 0 0 14px;
    border: 1px solid #aaa;
    background: #fff;
    font-size: 7px;
    line-height: 12px;
}
.hscroll .thumb {
    flex: 1;
    margin-right: 9px;
    background: #fff;
    border: 1px solid #aaa;
}

/* status bar */
.status {
    display: flex;
    flex: 0 0 21px;
    align-items: center;
    padding-bottom: 2px;
    background: #217346;
    color: #fff;
}
.mode {
    width: 47px;
    margin-left: 8px;
}
.views {
    display: flex;
    gap: 23px;
    margin-left: auto;
}
.zoomer {
    margin: 0 14px 0 15px;
}
.pct {
    width: 27px;
    color: #b8dcc6;
}
.edge {
    width: 4px;
    height: 19px;
    background: #234c90;
}

/* windows taskbar */
.taskbar {
    display: flex;
    flex: 0 0 37px;
    align-items: center;
    position: relative;
    padding-left: 7px;
    background: radial-gradient(ellipse at 45% 0, rgba(90, 105, 125, .6), transparent 25%), linear-gradient(#46525e, #1b262f 40%, #0d151b);
    border-top: 1px solid #5a6a66;
}
.app {
    display: flex;
    align-items: center;
    justify-content: center;
    flex: 0 0 58px;
    height: 36px;
}
.app.start {
    flex-basis: 36px;
}
.app.open {
    flex-basis: 54px;
    height: 35px;
    margin-right: 4px;
    border: 1px solid #84898c;
    border-radius: 3px;
    background: linear-gradient(135deg, #8b8f92, #3d4347 60%, #5a6064);
}
.app.start + .open {
    margin: 0 2px 0 14px;
}
.app.cam {
    margin-left: 2px;
}
.app.lit {
    background: linear-gradient(135deg, #a9adaf, #5c6265 60%, #9a9ea0);
}
.tray {
    display: flex;
    align-items: center;
    gap: 9px;
    margin-left: auto;
}
.clock {
    width: 75px;
    text-align: center;
    color: #fff;
    font-size: 11px;
    line-height: 16px;
}
.peek {
    width: 11px;
    height: 36px;
    border: 1px solid #6d767c;
    background: #27323a;
}
.caption-red {
    position: absolute;
    left: 0;
    bottom: 0;
    margin: 0;
    color: #e60000;
    font: 700 14px/16px "Liberation Serif", serif;
    white-space: nowrap;
}
```
